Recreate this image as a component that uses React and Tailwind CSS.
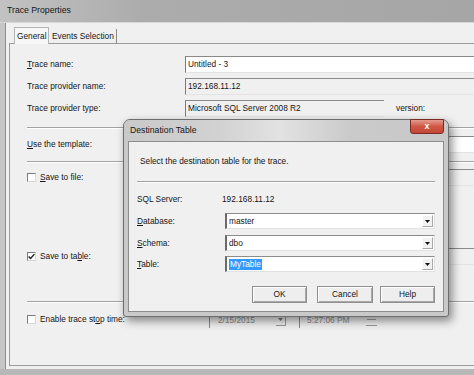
import React from 'react'

const U = ({ children }) => <span className="underline underline-offset-[1px] decoration-[0.8px]">{children}</span>

function Check({ checked }) {
  return (
    <span className="w-[9px] h-[9px] shrink-0 bg-white border border-t-[#7c7c7c] border-l-[#7c7c7c] border-r-[#d6d6d6] border-b-[#d6d6d6] flex items-center justify-center">
      {checked && (
        <svg width="7" height="7" viewBox="0 0 7 7">
          <path d="M0.6 3.4 L2.6 5.5 L6.4 1.1" stroke="#1e1e1e" strokeWidth="1.4" fill="none" />
        </svg>
      )}
    </span>
  )
}

function Field({ children, white, className = '' }) {
  return (
    <div
      className={`h-full flex items-center pl-[2px] border-t border-l border-t-[#8a8a8a] border-l-[#7a7a7a] border-b border-b-[#e3e3e3] ${
        white ? 'bg-white' : 'bg-[#f0f0f0]'
      } ${className}`}
    >
      {children}
    </div>
  )
}

function Arrow({ color = '#111' }) {
  return (
    <svg width="5" height="3" viewBox="0 0 5 3">
      <path d="M0 0 H5 L2.5 3 Z" fill={color} />
    </svg>
  )
}

function Combo({ children }) {
  return (
    <div className="h-[16px] flex-1 bg-white flex items-center pl-[2px] pr-[1px] border-t border-l-2 border-r border-b border-t-[#8c8c8c] border-l-[#6a6a6a] border-r-[#e2e2e2] border-b-[#e2e2e2]">
      <div className="flex-1 flex items-center">{children}</div>
      <div className="w-[11px] h-[12px] bg-[#f2f2f2] border border-t-[#fdfdfd] border-l-[#fdfdfd] border-r-[#a8a8a8] border-b-[#a8a8a8] flex items-center justify-center">
        <Arrow />
      </div>
    </div>
  )
}

function Btn({ children, w }) {
  return (
    <div
      className={`${w} h-[17px] flex items-center justify-center bg-[#eeeeee] border border-[#8f8f8f] shadow-[inset_1px_1px_0_#ffffff,inset_-1px_-1px_0_#a9a9a9]`}
    >
      {children}
    </div>
  )
}

function Sep() {
  return <div className="h-[2px] border-t border-t-[#a2a2a2] border-b border-b-white" />
}

function Row({ label, children, className = '' }) {
  return (
    <div className={`h-[17px] flex items-center ${className}`}>
      <div className="w-[158px] shrink-0">{label}</div>
      {children}
    </div>
  )
}

function CheckRow({ checked, label, children, className = '' }) {
  return (
    <div className={`h-[17px] flex items-center ${className}`}>
      <div className="w-[158px] shrink-0 flex items-center gap-[4px]">
        <Check checked={checked} />
        <span>{label}</span>
      </div>
      {children}
    </div>
  )
}

function DestinationTable() {
  return (
    <div className="absolute left-[123px] top-[119px] w-[326px] h-[198px] rounded-t-[7px] rounded-b-[3px] border border-[#6e6e6e] bg-[#c9c9c9] shadow-[3px_4px_10px_rgba(0,0,0,0.45)] flex flex-col">
      <div className="h-[21px] relative flex items-center pl-[6px] text-[8.7px] rounded-t-[6px] bg-[linear-gradient(90deg,#c9c9c9_0%,#d2d2d2_30%,#e2e2e2_48%,#cacaca_70%,#c8c8c8_100%)]">
        Destination Table
        <div className="absolute right-[4px] top-[-1px] w-[34px] h-[15px] rounded-b-[3px] border border-[#7a2b22] bg-gradient-to-b from-[#e39b90] via-[#cf5744] to-[#c4473a] flex items-center justify-center text-white text-[9px] font-bold leading-none">
          x
        </div>
      </div>
      <div className="mx-[4px] mb-[4px] flex-1 border border-[#8d8d8d] bg-[#f0f0f0] flex flex-col px-[8px]">
        <div className="pt-[14px] pl-[3px] leading-[10px]">Select the destination table for the trace.</div>
        <div className="mt-[15px]">
          <Sep />
        </div>
        <div className="mt-[11px] h-[10px] flex items-center">
          <div className="w-[85px]">SQL Server:</div>
          <div>192.168.11.12</div>
        </div>
        <div className="mt-[9px] flex items-center">
          <div className="w-[88px]">
            <U>D</U>atabase:
          </div>
          <Combo>master</Combo>
        </div>
        <div className="mt-[6px] flex items-center">
          <div className="w-[88px]">
            <U>S</U>chema:
          </div>
          <Combo>dbo</Combo>
        </div>
        <div className="mt-[5px] flex items-center">
          <div className="w-[88px]">
            <U>T</U>able:
          </div>
          <Combo>
            <span className="bg-[#3399ff] text-white px-[1px] leading-[11px]">MyTable</span>
          </Combo>
        </div>
        <div className="mt-[14px] flex justify-end">
          <Btn w="w-[55px]">OK</Btn>
          <div className="w-[10px]" />
          <Btn w="w-[56px]">Cancel</Btn>
          <div className="w-[7px]" />
          <Btn w="w-[55px]">Help</Btn>
        </div>
      </div>
    </div>
  )
}

export default function App() {
  return (
    <div className="relative w-[474px] h-[375px] overflow-hidden bg-[#b8b8b8] text-[8.3px] text-[#151515] font-['Liberation_Sans',Arial,sans-serif]">
      {/* window title */}
      <div className="h-[23px] flex items-center pl-[7px] text-[8.7px] border-b border-b-[#d8d8d8] bg-[linear-gradient(90deg,#c2c2c2_0%,#acacac_30%,#a6a6a6_100%)]">
        Trace Properties
      </div>

      <div className="flex h-[346px]">
        <div className="w-[6px] bg-[#c6c6c6] border-r border-r-[#8c8c8c]" />
        <div className="flex-1 bg-[#f0f0f0] pl-[3px] pt-[4px] flex flex-col">
          {/* tabs */}
          <div className="h-[17px] flex ml-[5px] -mb-px relative">
            <div className="w-[35px] flex items-center pl-[2px] bg-[#f7f7f7] border border-b-0 border-[#b4b4b4]">General</div>
            <div className="w-[68px] flex items-center pl-[3px] border-r border-r-[#8a8a8a] mt-[2px]">Events Selection</div>
          </div>

          {/* tab panel */}
          <div className="flex-1 -mr-[20px] mb-[3px] border-t border-l border-b border-[#9c9c9c] pl-[17px] pt-[12px]">
            <Row label={<><U>T</U>race name:</>}>
              <Field white className="flex-1">Untitled - 3</Field>
            </Row>
            <Row label="Trace provider name:" className="mt-[5px]">
              <Field className="flex-1">192.168.11.12</Field>
            </Row>
            <Row label="Trace provider type:" className="mt-[5px]">
              <Field className="w-[199px]">Microsoft SQL Server 2008 R2</Field>
              <div className="ml-[12px]">version:</div>
            </Row>
            <div className="mt-[10px]">
              <Sep />
            </div>
            <Row label={<><U>U</U>se the template:</>} className="mt-[7px]">
              <Field white className="flex-1" />
            </Row>
            <div className="mt-[8px]">
              <Sep />
            </div>
            <CheckRow label={<><U>S</U>ave to file:</>} className="mt-[6px]">
              <Field className="flex-1" />
            </CheckRow>
            <CheckRow checked label={<>Save to ta<U>b</U>le:</>} className="mt-[62px]">
              <Field className="flex-1" />
            </CheckRow>
            <div className="mt-[36px]">
              <Sep />
            </div>
            <CheckRow label={<>Enable trace st<U>o</U>p time:</>} className="mt-[8px]">
              <div className="ml-[24px] w-[80px] h-full flex items-center border-l border-t border-l-[#8a8a8a] border-t-[#a0a0a0] pl-[8px] text-[#8c8c8c]">
                <span className="flex-1">2/15/2015</span>
                <span className="w-[10px] h-[11px] mr-[3px] border-r border-b border-[#9a9a9a] flex items-center justify-center">
                  <Arrow color="#777" />
                </span>
              </div>
              <div className="ml-[10px] w-[78px] h-full flex items-center border-l border-t border-l-[#8a8a8a] border-t-[#a0a0a0] pl-[7px] text-[#8c8c8c]">
                <span className="flex-1">5:27:06 PM</span>
                <span className="w-[11px] h-[11px] border-b border-[#9a9a9a] flex flex-col items-center justify-center gap-[1px]">
                  <span className="w-[9px] h-px bg-[#a0a0a0]" />
                </span>
              </div>
            </CheckRow>
          </div>
        </div>
      </div>

      <DestinationTable />
    </div>
  )
}
